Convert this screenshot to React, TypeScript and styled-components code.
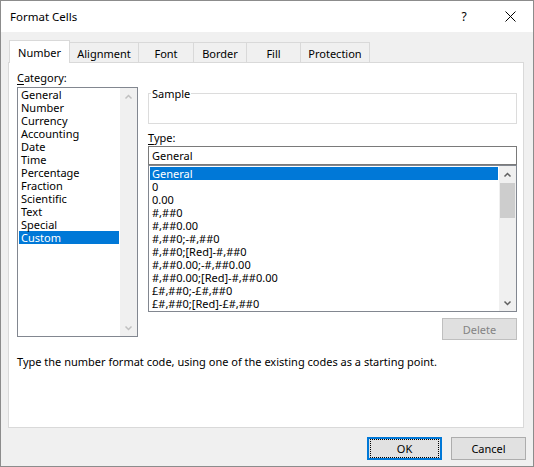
import { createGlobalStyle, styled } from 'styled-components'

const GlobalStyle = createGlobalStyle`
  html, body {
    margin: 0;
    padding: 0;
    background: #ffffff;
  }
  body {
    font-family: 'Noto Sans', 'Liberation Sans', sans-serif;
    font-size: 11px;
    color: #000000;
  }
`

const categories = [
  'General',
  'Number',
  'Currency',
  'Accounting',
  'Date',
  'Time',
  'Percentage',
  'Fraction',
  'Scientific',
  'Text',
  'Special',
  'Custom',
]

const formats = [
  'General',
  '0',
  '0.00',
  '#,##0',
  '#,##0.00',
  '#,##0;-#,##0',
  '#,##0;[Red]-#,##0',
  '#,##0.00;-#,##0.00',
  '#,##0.00;[Red]-#,##0.00',
  '£#,##0;-£#,##0',
  '£#,##0;[Red]-£#,##0',
]

const tabs = [
  { label: 'Number', width: 61 },
  { label: 'Alignment', width: 70 },
  { label: 'Font', width: 56 },
  { label: 'Border', width: 54 },
  { label: 'Fill', width: 55 },
  { label: 'Protection', width: 70 },
]

const Window = styled.div`
  box-sizing: border-box;
  width: 534px;
  height: 467px;
  border: 1px solid #8c8c8c;
  background: #f0f0f0;
  display: flex;
  flex-direction: column;
`

const TitleBar = styled.div`
  height: 31px;
  background: #ffffff;
  display: flex;
  align-items: center;
  padding-left: 9px;
`

const TitleText = styled.div`
  flex: 1;
  font-size: 11.5px;
`

const TitleButton = styled.div`
  width: 46px;
  height: 31px;
  display: flex;
  align-items: center;
  justify-content: center;
  font-size: 12px;
`

const Body = styled.div`
  padding: 8px 9px 0 7px;
  display: flex;
  flex-direction: column;
`

const TabRow = styled.div`
  display: flex;
  align-items: flex-end;
  height: 22px;
  position: relative;
  z-index: 1;
`

const Tab = styled.div<{ $active: boolean; $width: number }>`
  box-sizing: border-box;
  width: ${({ $width }) => $width}px;
  margin-left: -1px;
  height: ${({ $active }) => ($active ? '23px' : '20px')};
  margin-bottom: ${({ $active }) => ($active ? '-1px' : '0')};
  border: 1px solid #d9d9d9;
  border-bottom: none;
  background: ${({ $active }) => ($active ? '#ffffff' : '#f0f0f0')};
  display: flex;
  align-items: flex-start;
  padding-top: ${({ $active }) => ($active ? '4px' : '3px')};
  justify-content: center;
  line-height: 15px;

  &:first-child {
    margin-left: 1px;
  }
`

const Panel = styled.div`
  box-sizing: border-box;
  height: 366px;
  border: 1px solid #d9d9d9;
  background: #ffffff;
  padding: 7px 6px 0 8px;
  display: flex;
  flex-direction: column;
`

const Columns = styled.div`
  display: flex;
  gap: 10px;
`

const LeftColumn = styled.div`
  width: 121px;
  display: flex;
  flex-direction: column;
`

const RightColumn = styled.div`
  width: 369px;
  display: flex;
  flex-direction: column;
`

const Label = styled.div`
  line-height: 15px;
  height: 15px;
`

const AccessKey = styled.span`
  text-decoration: underline;
  text-underline-offset: 2px;
`

const ListBox = styled.div<{ $height: number }>`
  box-sizing: border-box;
  height: ${({ $height }) => $height}px;
  border: 1px solid #828790;
  background: #ffffff;
  display: flex;
`

const CategoryBox = styled(ListBox)`
  margin-top: 2px;
`

const Items = styled.div<{ $padTop: number }>`
  flex: 1;
  padding: ${({ $padTop }) => $padTop}px 1px 0 1px;
  overflow: hidden;
`

const Item = styled.div<{ $selected: boolean }>`
  height: 13px;
  line-height: 13px;
  padding-left: 2px;
  white-space: nowrap;
  background: ${({ $selected }) => ($selected ? '#0078d7' : 'transparent')};
  color: ${({ $selected }) => ($selected ? '#ffffff' : '#000000')};
`

const ScrollBar = styled.div`
  width: 17px;
  background: #f0f0f0;
  display: flex;
  flex-direction: column;
`

const ScrollArrow = styled.div`
  height: 17px;
  display: flex;
  align-items: center;
  justify-content: center;
`

const ScrollTrack = styled.div`
  flex: 1;
  display: flex;
  flex-direction: column;
`

const Thumb = styled.div`
  margin: 0 1px;
  height: 35px;
  background: #cdcdcd;
`

const SampleGroup = styled.fieldset`
  box-sizing: border-box;
  margin: 16px 0 0 0;
  padding: 0;
  height: 38px;
  border: 1px solid #dcdcdc;
  min-width: 0;

  legend {
    margin-left: 2px;
    padding: 0 1px;
    line-height: 15px;
  }
`

const TypeLabel = styled(Label)`
  margin-top: 6px;
`

const TypeInput = styled.div`
  box-sizing: border-box;
  margin-top: 1px;
  height: 19px;
  border: 1px solid #7a7a7a;
  padding-left: 3px;
  line-height: 17px;
`

const ButtonRow = styled.div<{ $pad: string }>`
  display: flex;
  justify-content: flex-end;
  gap: 9px;
  padding: ${({ $pad }) => $pad};
`

const Button = styled.div<{ $variant: 'default' | 'normal' | 'disabled' }>`
  box-sizing: border-box;
  width: 75px;
  height: ${({ $variant }) => ($variant === 'disabled' ? '22px' : '23px')};
  display: flex;
  align-items: center;
  justify-content: center;
  background: ${({ $variant }) => ($variant === 'disabled' ? '#e0e0e0' : '#e1e1e1')};
  color: ${({ $variant }) => ($variant === 'disabled' ? '#838383' : '#000000')};
  border: ${({ $variant }) =>
    $variant === 'default'
      ? '2px solid #0078d7'
      : $variant === 'disabled'
        ? '1px solid #bfbfbf'
        : '1px solid #adadad'};
`

const FocusRect = styled.div`
  box-sizing: border-box;
  width: 100%;
  height: 100%;
  margin: 1px;
  border: 1px dotted #000000;
  display: flex;
  align-items: center;
  justify-content: center;
`

const Hint = styled.div`
  margin-top: 14px;
  line-height: 15px;
`

const Chevron = ({ up, color }: { up: boolean; color: string }) => (
  <svg width="9" height="6" viewBox="0 0 9 6">
    <path
      d={up ? 'M1.5 4.5 L4.5 1.5 L7.5 4.5' : 'M1.5 1.5 L4.5 4.5 L7.5 1.5'}
      fill="none"
      stroke={color}
      strokeWidth="1.5"
    />
  </svg>
)

const CloseIcon = () => (
  <svg width="11" height="11" viewBox="0 0 11 11">
    <path d="M0.5 0.5 L10.5 10.5 M10.5 0.5 L0.5 10.5" stroke="#000" strokeWidth="1" />
  </svg>
)

export default function App() {
  return (
    <>
      <GlobalStyle />
      <Window>
        <TitleBar>
          <TitleText>Format Cells</TitleText>
          <TitleButton>?</TitleButton>
          <TitleButton>
            <CloseIcon />
          </TitleButton>
        </TitleBar>

        <Body>
          <TabRow>
            {tabs.map((t, i) => (
              <Tab key={t.label} $active={i === 0} $width={t.width}>
                {t.label}
              </Tab>
            ))}
          </TabRow>

          <Panel>
            <Columns>
              <LeftColumn>
                <Label>
                  <AccessKey>C</AccessKey>ategory:
                </Label>
                <CategoryBox $height={250}>
                  <Items $padTop={0}>
                    {categories.map(c => (
                      <Item key={c} $selected={c === 'Custom'}>
                        {c}
                      </Item>
                    ))}
                  </Items>
                  <ScrollBar>
                    <ScrollArrow>
                      <Chevron up color="#c0c0c0" />
                    </ScrollArrow>
                    <ScrollTrack />
                    <ScrollArrow>
                      <Chevron up={false} color="#c0c0c0" />
                    </ScrollArrow>
                  </ScrollBar>
                </CategoryBox>
              </LeftColumn>

              <RightColumn>
                <SampleGroup>
                  <legend>Sample</legend>
                </SampleGroup>
                <TypeLabel>
                  <AccessKey>T</AccessKey>ype:
                </TypeLabel>
                <TypeInput>General</TypeInput>
                <ListBox $height={147}>
                  <Items $padTop={1}>
                    {formats.map((f, i) => (
                      <Item key={f} $selected={i === 0}>
                        {f}
                      </Item>
                    ))}
                  </Items>
                  <ScrollBar>
                    <ScrollArrow>
                      <Chevron up color="#606060" />
                    </ScrollArrow>
                    <ScrollTrack>
                      <Thumb />
                    </ScrollTrack>
                    <ScrollArrow>
                      <Chevron up={false} color="#606060" />
                    </ScrollArrow>
                  </ScrollBar>
                </ListBox>
                <ButtonRow $pad="6px 0 0 0">
                  <Button $variant="disabled">Delete</Button>
                </ButtonRow>
              </RightColumn>
            </Columns>

            <Hint>
              Type the number format code, using one of the existing codes as a
              starting point.
            </Hint>
          </Panel>
        </Body>

        <ButtonRow $pad="9px 7px 0 0">
          <Button $variant="default">
            <FocusRect>OK</FocusRect>
          </Button>
          <Button $variant="normal">Cancel</Button>
        </ButtonRow>
      </Window>
    </>
  )
}
